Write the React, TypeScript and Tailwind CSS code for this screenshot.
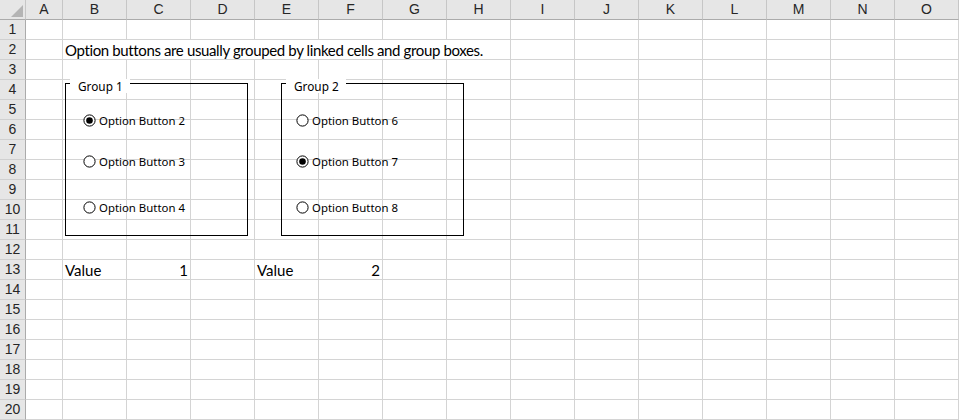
import React from "react";

const COLS = ["A", "B", "C", "D", "E", "F", "G", "H", "I", "J", "K", "L", "M", "N", "O"];

type CellDef = { text: string; align?: "left" | "right"; span?: number };

const cellData: Record<string, CellDef> = {
  B2: { text: "Option buttons are usually grouped by linked cells and group boxes.", span: 7 },
  B13: { text: "Value" },
  C13: { text: "1", align: "right" },
  E13: { text: "Value" },
  F13: { text: "2", align: "right" },
};

function Radio({ checked }: { checked?: boolean }) {
  return (
    <svg width="13" height="13" viewBox="0 0 13 13" className="shrink-0">
      <circle cx="6.5" cy="6.5" r="5.6" fill="white" stroke="black" strokeWidth="1" />
      {checked && <circle cx="6.5" cy="6.5" r="3.3" fill="black" />}
    </svg>
  );
}

function OptionRow({ left, top, label, checked }: { left: number; top: number; label: string; checked?: boolean }) {
  return (
    <div
      className="absolute flex items-center gap-[3px] text-[11.4px] leading-[13px] text-black font-['Noto_Sans',sans-serif] whitespace-nowrap"
      style={{ left, top }}
    >
      <Radio checked={checked} />
      <span>{label}</span>
    </div>
  );
}

function GroupBox({ left, label }: { left: number; label: string }) {
  return (
    <div
      className="absolute top-[83px] w-[183px] h-[153px] border border-black"
      style={{ left }}
    >
      <div className="absolute left-[4px] -top-[5px] bg-white pl-[8px] pr-[7px] text-[11.8px] leading-[14px] text-black font-['Noto_Sans',sans-serif] whitespace-nowrap">
        {label}
      </div>
    </div>
  );
}

export default function App() {
  const rows = Array.from({ length: 20 }, (_, i) => i + 1);
  return (
    <div className="relative w-[959px] h-[420px] bg-white overflow-hidden">
      <div className="grid grid-cols-[26px_37px_repeat(14,64px)] grid-rows-[repeat(21,20px)] font-['Lato',sans-serif]">
        {/* corner */}
        <div className="relative bg-[#e6e6e6] border-r border-b border-r-[#c6c6c6] border-b-[#ababab]">
          <svg width="25" height="19" viewBox="0 0 25 19" className="absolute left-0 top-0">
            <polygon points="23,5 23,17 11,17" fill="#b4b4b4" />
          </svg>
        </div>
        {COLS.map((c) => (
          <div
            key={c}
            className="bg-[#e6e6e6] border-r border-b border-r-[#c6c6c6] border-b-[#ababab] flex items-center justify-center text-[14px] text-[#262626] font-['Liberation_Sans',sans-serif]"
          >
            {c}
          </div>
        ))}
        {rows.map((r) => {
          const out: React.ReactNode[] = [];
          out.push(
            <div
              key={`h${r}`}
              className="bg-[#e6e6e6] border-r border-b border-r-[#ababab] border-b-[#d0d0d0] flex items-center justify-center text-[14px] text-[#262626] font-['Liberation_Sans',sans-serif]"
            >
              {r}
            </div>
          );
          let skip = 0;
          COLS.forEach((c) => {
            if (skip > 0) {
              skip--;
              return;
            }
            const key = `${c}${r}`;
            const d = cellData[key];
            if (d?.span) {
              skip = d.span - 1;
              out.push(
                <div
                  key={key}
                  className="col-span-7 border-r border-b border-[#d4d4d4] flex items-end px-[2px] text-[15px] leading-[18px] tracking-[-0.37px] text-black whitespace-nowrap"
                >
                  {d.text}
                </div>
              );
              return;
            }
            out.push(
              <div
                key={key}
                className={`border-r border-b border-[#d4d4d4] flex items-end px-[2px] text-[15px] leading-[18px] text-black whitespace-nowrap ${
                  d?.align === "right" ? "justify-end" : "justify-start"
                }`}
              >
                {d?.text ?? ""}
              </div>
            );
          });
          return out;
        })}
      </div>

      <GroupBox left={65} label="Group 1" />
      <GroupBox left={281} label="Group 2" />

      <OptionRow left={83} top={114} label="Option Button 2" checked />
      <OptionRow left={83} top={155} label="Option Button 3" />
      <OptionRow left={83} top={201} label="Option Button 4" />

      <OptionRow left={296} top={114} label="Option Button 6" />
      <OptionRow left={296} top={155} label="Option Button 7" checked />
      <OptionRow left={296} top={201} label="Option Button 8" />
    </div>
  );
}
